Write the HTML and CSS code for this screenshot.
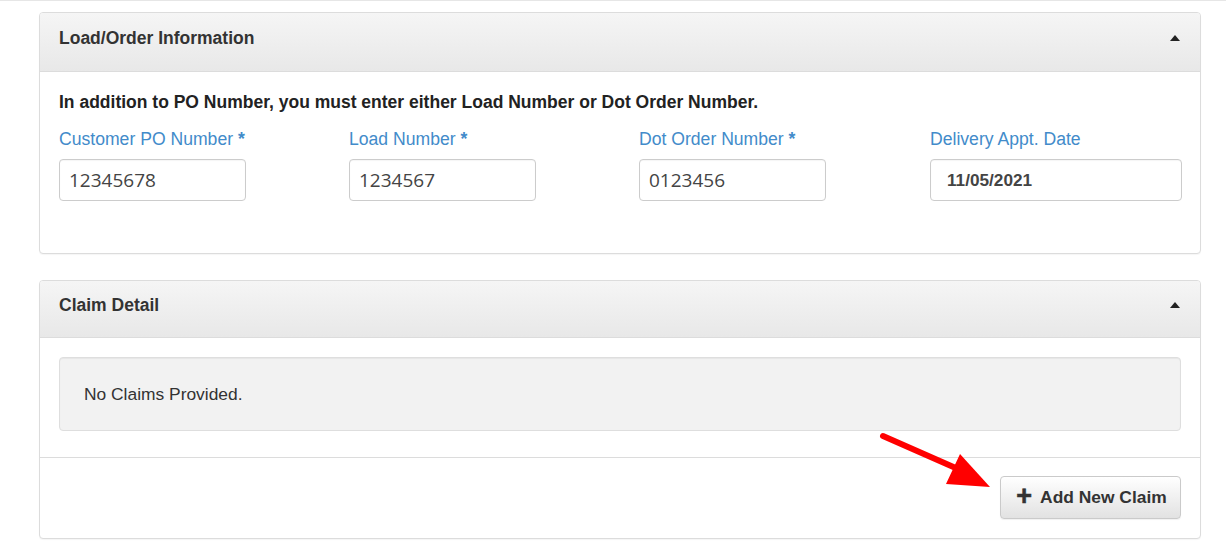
FILE: index.html
```html
<!DOCTYPE html>
<html lang="en">
<head>
<meta charset="utf-8">
<title>Load/Order Information</title>
<link rel="stylesheet" href="styles.css">
</head>
<body>
<div class="prev-edge"></div>
<div class="page">
  <section class="panel panel-first">
    <div class="panel-heading">
      <h3 class="panel-title">Load/Order Information</h3>
      <span class="caret-up"></span>
    </div>
    <div class="panel-body body-load">
      <p class="instruction">In addition to PO Number, you must enter either Load Number or Dot Order Number.</p>
      <div class="field-row">
        <div class="field">
          <label class="field-label">Customer PO Number <span class="req">*</span></label>
          <div class="input input-short">12345678</div>
        </div>
        <div class="field">
          <label class="field-label">Load Number <span class="req">*</span></label>
          <div class="input input-short">1234567</div>
        </div>
        <div class="field">
          <label class="field-label">Dot Order Number <span class="req">*</span></label>
          <div class="input input-short">0123456</div>
        </div>
        <div class="field">
          <label class="field-label">Delivery Appt. Date</label>
          <div class="input input-date">11/05/2021</div>
        </div>
      </div>
    </div>
  </section>

  <section class="panel panel-second">
    <div class="panel-heading">
      <h3 class="panel-title">Claim Detail</h3>
      <span class="caret-up"></span>
    </div>
    <div class="panel-body body-claim">
      <div class="well">No Claims Provided.</div>
    </div>
    <div class="panel-footer">
      <button class="btn" type="button"><span class="plus">+</span> Add New Claim</button>
    </div>
  </section>

  <svg class="arrow" width="120" height="60" viewBox="0 0 120 60" aria-hidden="true">
    <line x1="5" y1="7" x2="80" y2="40" stroke="#ff0000" stroke-width="6" stroke-linecap="round"/>
    <polygon points="68,55 82,25 112,58" fill="#ff0000"/>
  </svg>
</div>
</body>
</html>
```
FILE: styles.css
```css
* { box-sizing: border-box; }
html, body { margin: 0; padding: 0; background: #fff; }
body {
  font-family: "Liberation Sans", Arial, sans-serif;
  color: #333;
  width: 1226px;
  height: 551px;
  overflow: hidden;
}
.prev-edge {
  height: 1px;
  background: #e6e6e6;
}
.page {
  position: relative;
  padding: 11px 25px 0 39px;
}
.panel {
  border: 1px solid #dcdcdc;
  border-radius: 4px;
  background: #fff;
  box-shadow: 0 1px 1px rgba(0,0,0,0.04);
}
.panel-second { margin-top: 26px; }
.panel-heading {
  height: 59px;
  display: flex;
  align-items: flex-start;
  justify-content: space-between;
  padding: 15px 19px 0 19px;
  background: linear-gradient(to bottom, #f5f5f5 0%, #e8e8e8 100%);
  border-bottom: 1px solid #dcdcdc;
  border-radius: 3px 3px 0 0;
}
.panel-second .panel-heading { height: 57px; padding-top: 14px; }
.panel-title {
  margin: 0;
  font-size: 17.5px;
  font-weight: bold;
  color: #333;
  line-height: 20px;
}
.caret-up {
  width: 0;
  height: 0;
  border-left: 5px solid transparent;
  border-right: 5px solid transparent;
  border-bottom: 6px solid #222;
  margin-top: 7px;
  margin-right: 1px;
}
.panel-body { padding: 20px 19px; }
.body-load { padding-top: 20px; padding-bottom: 52px; }
.instruction {
  margin: 0;
  font-size: 17.5px;
  font-weight: bold;
  line-height: 20px;
  color: #222;
}
.field-row {
  display: grid;
  grid-template-columns: 290px 290px 291px 252px;
  margin-top: 17px;
}
.field-label {
  display: block;
  font-size: 17.6px;
  line-height: 20px;
  color: #428bca;
}
.req { font-weight: bold; }
.input {
  margin-top: 10px;
  height: 42px;
  border: 1px solid #cccccc;
  border-radius: 4px;
  padding: 0 9px;
  display: flex;
  align-items: center;
  font-family: "Open Sans", sans-serif;
  font-size: 19px;
  color: #444;
  box-shadow: inset 0 1px 1px rgba(0,0,0,0.04);
}
.input-short { width: 187px; }
.input-date {
  width: 252px;
  font-family: "Liberation Sans", Arial, sans-serif;
  font-weight: bold;
  font-size: 17.2px;
  color: #444;
  padding-left: 16px;
}
.body-claim { padding-top: 19px; padding-bottom: 26px; }
.well {
  height: 74px;
  background: #f2f2f2;
  border: 1px solid #dedede;
  border-radius: 4px;
  padding: 0 24px;
  display: flex;
  align-items: center;
  font-size: 17.4px;
  color: #333;
  box-shadow: inset 0 1px 1px rgba(0,0,0,0.05);
}
.panel-footer {
  border-top: 1px solid #dcdcdc;
  padding: 18px 19px 19px;
  display: flex;
  justify-content: flex-end;
}
.btn {
  width: 181px;
  height: 43px;
  border: 1px solid #cacaca;
  border-radius: 4px;
  background: linear-gradient(to bottom, #ffffff 0%, #e2e2e2 100%);
  font-family: "Liberation Sans", Arial, sans-serif;
  font-size: 17.4px;
  font-weight: bold;
  color: #333;
  display: flex;
  align-items: center;
  justify-content: center;
  gap: 8px;
  padding: 0 0 0 2px;
  box-shadow: 0 1px 1px rgba(0,0,0,0.06);
}
.plus {
  font-size: 27px;
  font-weight: 900;
  line-height: 16px;
  margin-top: -3px;
  -webkit-text-stroke: 0.6px #333;
}
.arrow {
  position: absolute;
  left: 878px;
  top: 428px;
}
```
